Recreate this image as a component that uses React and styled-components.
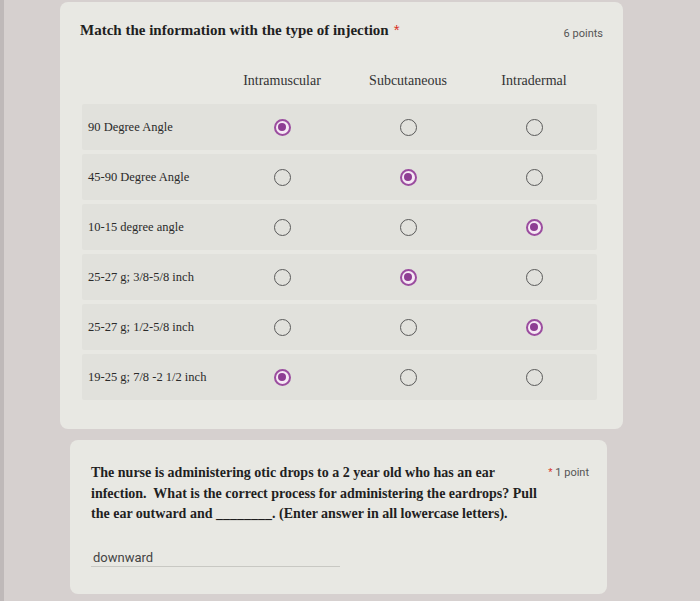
import React from "react";
import styled, { createGlobalStyle } from "styled-components";

const Global = createGlobalStyle`
  html, body { margin: 0; padding: 0; background: #d6d0cf; }
  body { font-family: "Liberation Serif", serif; }
`;

const Page = styled.div`
  width: 700px;
  height: 601px;
  box-sizing: border-box;
  border-left: 4px solid #bfb9b9;
  padding-top: 2px;
  overflow: hidden;
`;

const Card = styled.div`
  box-sizing: border-box;
  margin-left: ${(p) => p.$left}px;
  width: ${(p) => p.$width}px;
  background: #e8e8e3;
  border-radius: 8px;
  padding: ${(p) => p.$pad};
  margin-bottom: ${(p) => p.$mb || 0}px;
`;

const TitleRow = styled.div`
  display: flex;
  justify-content: space-between;
  align-items: center;
  height: 20px;
  padding: 0 20px 0 20px;
`;

const Title = styled.div`
  font-family: "Liberation Serif", serif;
  font-weight: 700;
  font-size: 15px;
  color: #1f1f1f;
`;

const Star = styled.span`
  color: #d93025;
  font-family: "Liberation Sans", sans-serif;
  font-weight: 400;
  margin-left: 5px;
`;

const Points = styled.div`
  font-family: "Roboto", sans-serif;
  font-size: 11px;
  color: #555;
  padding-top: ${(p) => p.$top || 0}px;
  white-space: nowrap;
`;

const Grid = styled.div`
  margin: 26px 0 0 22px;
  display: grid;
  grid-template-columns: 137px repeat(3, 126px);
  row-gap: 4px;
`;

const HeaderRow = styled.div`
  display: contents;
`;

const HeaderCell = styled.div`
  height: 30px;
  margin-bottom: 4px;
  display: flex;
  align-items: center;
  justify-content: center;
  font-size: 14px;
  color: #333;
`;

const Band = styled.div`
  grid-column: 1 / -1;
  display: grid;
  grid-template-columns: 137px repeat(3, 126px);
  height: 46px;
  background: #e1e1dc;
  border-radius: 2px;
  align-items: center;
`;

const RowLabel = styled.div`
  padding-left: 6px;
  font-size: 12.5px;
  color: #2a2a2a;
`;

const Cell = styled.div`
  display: flex;
  justify-content: center;
  align-items: center;
`;

const Radio = styled.div`
  box-sizing: border-box;
  width: 17px;
  height: 17px;
  border-radius: 50%;
  border: ${(p) => (p.$on ? "2px solid #9b4d9f" : "1.6px solid #5a5a5a")};
  background: ${(p) => (p.$on ? "#f6e8f5" : "transparent")};
  display: flex;
  align-items: center;
  justify-content: center;
  &::after {
    content: "";
    display: ${(p) => (p.$on ? "block" : "none")};
    width: 8px;
    height: 8px;
    border-radius: 50%;
    background: #8e3d93;
  }
`;

const QRow = styled.div`
  display: flex;
  justify-content: space-between;
  align-items: flex-start;
`;

const QText = styled.div`
  width: 458px;
  font-family: "Liberation Serif", serif;
  font-weight: 700;
  font-size: 14px;
  line-height: 20.5px;
  color: #1f1f1f;
`;

const Answer = styled.div`
  margin-top: 25px;
  width: 247px;
  padding: 0 0 1px 2px;
  border-bottom: 1px solid #c8c8c3;
  font-family: "Roboto", sans-serif;
  font-size: 13px;
  color: #444;
`;

const cols = ["Intramuscular", "Subcutaneous", "Intradermal"];
const rows = [
  ["90 Degree Angle", 0],
  ["45-90 Degree Angle", 1],
  ["10-15 degree angle", 2],
  ["25-27 g; 3/8-5/8 inch", 1],
  ["25-27 g; 1/2-5/8 inch", 2],
  ["19-25 g; 7/8 -2 1/2 inch", 0],
];

export default function App() {
  return (
    <>
      <Global />
      <Page>
        <Card $left={56} $width={563} $pad="18px 0 29px 0" $mb={11}>
          <TitleRow>
            <Title>
              Match the information with the type of injection<Star>*</Star>
            </Title>
            <Points $top={6}>6 points</Points>
          </TitleRow>
          <Grid>
            <HeaderRow>
              <HeaderCell />
              {cols.map((c) => (
                <HeaderCell key={c}>{c}</HeaderCell>
              ))}
            </HeaderRow>
            {rows.map(([label, sel]) => (
              <Band key={label}>
                <RowLabel>{label}</RowLabel>
                {cols.map((c, i) => (
                  <Cell key={c}>
                    <Radio $on={i === sel} />
                  </Cell>
                ))}
              </Band>
            ))}
          </Grid>
        </Card>
        <Card $left={66} $width={537} $pad="23px 18px 27px 21px">
          <QRow>
            <QText>
              The nurse is administering otic drops to a 2 year old who has an ear
              infection.&nbsp; What is the correct process for administering the
              eardrops? Pull the ear outward and ________. (Enter answer in all
              lowercase letters).
            </QText>
            <Points $top={3}>
              <Star>*</Star> 1 point
            </Points>
          </QRow>
          <Answer>downward</Answer>
        </Card>
      </Page>
    </>
  );
}
